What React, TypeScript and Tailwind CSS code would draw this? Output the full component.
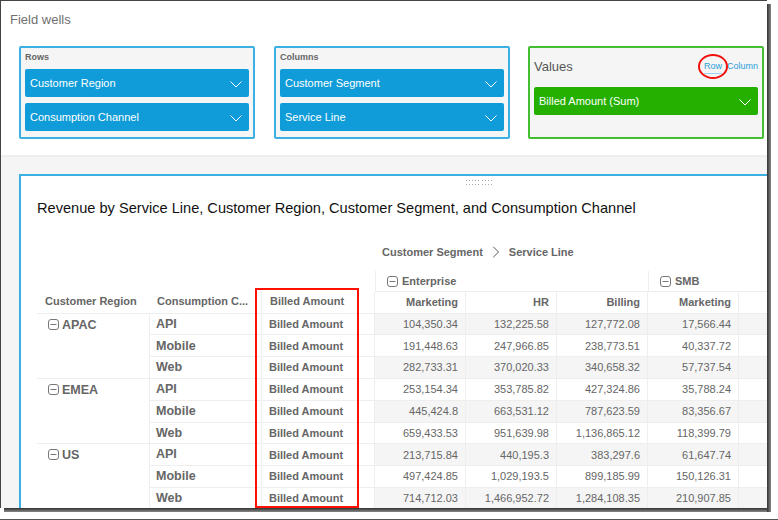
import { ChevronRight } from 'lucide-react';

const groups = [
  {
    region: 'APAC',
    rows: [
      ['API', '104,350.34', '132,225.58', '127,772.08', '17,566.44'],
      ['Mobile', '191,448.63', '247,966.85', '238,773.51', '40,337.72'],
      ['Web', '282,733.31', '370,020.33', '340,658.32', '57,737.54'],
    ],
  },
  {
    region: 'EMEA',
    rows: [
      ['API', '253,154.34', '353,785.82', '427,324.86', '35,788.24'],
      ['Mobile', '445,424.8', '663,531.12', '787,623.59', '83,356.67'],
      ['Web', '659,433.53', '951,639.98', '1,136,865.12', '118,399.79'],
    ],
  },
  {
    region: 'US',
    rows: [
      ['API', '213,715.84', '440,195.3', '383,297.6', '61,647.74'],
      ['Mobile', '497,424.85', '1,029,193.5', '899,185.99', '150,126.31'],
      ['Web', '714,712.03', '1,466,952.72', '1,284,108.35', '210,907.85'],
    ],
  },
];

function Chevron() {
  return (
    <svg width="12" height="7" viewBox="0 0 12 7" fill="none" stroke="white" strokeWidth="1" className="mt-[2px]">
      <path d="M0.5 0.5 L6 6 L11.5 0.5" />
    </svg>
  );
}

function Pill({ label, green }: { label: string; green?: boolean }) {
  return (
    <div
      className={
        'flex h-[28px] items-center justify-between rounded-[2px] pl-[5px] pr-[7px] text-[11px] text-white ' +
        (green ? 'bg-[#25b000]' : 'bg-[#0f9cd8]')
      }
    >
      <span>{label}</span>
      <Chevron />
    </div>
  );
}

function Well({ title, items, className }: { title: string; items: string[]; className: string }) {
  return (
    <div className={'h-[93px] w-[236px] rounded-[2px] border-2 border-[#3cb0e3] bg-[#f5f5f6] px-[4px] ' + className}>
      <div className="mt-[2px] h-[19px] text-[9px] font-bold leading-[14px] text-[#666]">{title}</div>
      <div className="flex flex-col gap-[6px]">
        {items.map((item) => (
          <Pill key={item} label={item} />
        ))}
      </div>
    </div>
  );
}

function Minus() {
  return (
    <svg width="11" height="11" viewBox="0 0 11 11" fill="none" stroke="#777" strokeWidth="1" className="shrink-0">
      <rect x="0.5" y="0.5" width="10" height="10" rx="2.5" />
      <path d="M2.5 5.5 H8.5" />
    </svg>
  );
}

export default function App() {
  return (
    <div className="relative h-[520px] w-[778px] overflow-hidden bg-white font-['Liberation_Sans',sans-serif]">
      <div className="relative flex h-[508px] w-[767px] flex-col overflow-hidden border-l border-t border-[#444]">
        {/* Field wells */}
        <div className="h-[156px] shrink-0 border-b-2 border-[#eeeeee] bg-white">
          <div className="h-[45px] pl-[9px] pt-[11px] text-[13px] leading-[16px] text-[#707070]">Field wells</div>
          <div className="flex">
            <Well title="Rows" items={['Customer Region', 'Consumption Channel']} className="ml-[18px]" />
            <Well title="Columns" items={['Customer Segment', 'Service Line']} className="ml-[19px]" />
            <div className="ml-[18px] h-[93px] w-[236px] rounded-[2px] border-2 border-[#44bd32] bg-[#f5f5f6] px-[4px]">
              <div className="flex h-[39px] items-center justify-between pb-[2px]">
                <span className="text-[13px] text-[#555]">Values</span>
                <div className="flex gap-[5px] text-[9px] leading-[12px] text-[#2b9fd8]">
                  <span className="border-b border-[#9fd4ef] pb-[1px]">Row</span>
                  <span className="pb-[2px]">Column</span>
                </div>
              </div>
              <Pill label="Billed Amount (Sum)" green />
            </div>
          </div>
        </div>

        {/* Pivot table card */}
        <div className="flex-1 bg-[#f5f5f5] pl-[18px] pt-[17px]">
          <div className="h-[400px] border-l-2 border-t-2 border-[#3cb0e3] bg-white pl-[16px]">
            <div className="ml-[429px] grid h-[6px] w-[28px] translate-y-[4px] grid-cols-[repeat(9,1fr)] gap-y-[2px]">
              {Array.from({ length: 18 }).map((_, i) => (
                <span key={i} className="h-[1px] w-[1px] bg-[#aaa]" />
              ))}
            </div>
            <div className="mt-[16px] h-[24px] text-[14.6px] leading-[20px] text-[#111]">
              Revenue by Service Line, Customer Region, Customer Segment, and Consumption Channel
            </div>
            <div className="ml-[345px] mt-[22px] flex h-[16px] items-center text-[11px] font-bold text-[#666]">
              Customer Segment
              <ChevronRight size={20} strokeWidth={1.2} className="mx-[3px] text-[#555]" />
              Service Line
            </div>

            <div className="mt-[11px] grid grid-cols-[112px_113px_113px_91px_91px_91px_91px_28px] grid-rows-[21px_21.7px_repeat(9,21.8px)] text-[11px] text-[#666]">
              {/* header */}
              <div className="col-span-3" />
              <div className="col-span-3 flex items-center gap-[4px] border-b border-l border-[#eee] pl-[11px] font-bold">
                <Minus />
                Enterprise
              </div>
              <div className="col-span-2 flex items-center gap-[4px] border-b border-l border-[#eee] pl-[11px] font-bold">
                <Minus />
                SMB
              </div>
              <div className="flex items-center border-b border-[#eee] pb-[2px] pl-[8px] font-bold">Customer Region</div>
              <div className="flex items-center border-b border-r border-[#eee] pb-[2px] pl-[8px] font-bold">Consumption C...</div>
              <div className="flex items-center border-b border-r border-[#eee] pb-[2px] pl-[8px] font-bold">Billed Amount</div>
              {['Marketing', 'HR', 'Billing', 'Marketing'].map((h, i) => (
                <div key={i} className="flex items-center justify-end border-b border-r border-[#eee] pr-[7px] font-bold">
                  {h}
                </div>
              ))}
              <div className="border-b border-[#eee]" />

              {groups.map((g, gi) =>
                g.rows.map((row, ri) => {
                  const grey = (gi * 3 + ri) % 2 === 0;
                  return (
                    <div key={g.region + ri} className="contents">
                      {ri === 0 && (
                        <div className="row-span-3 flex items-start gap-[3px] border-b border-[#eee] pl-[11px] pt-[3px] text-[12.5px] font-bold leading-[16px]">
                          <span className="mt-[2px]">
                            <Minus />
                          </span>
                          {g.region}
                        </div>
                      )}
                      <div className="flex items-center border-b border-l border-r border-[#eee] pl-[6px] text-[12.5px] font-bold">{row[0]}</div>
                      <div className="flex items-center border-b border-r border-[#eee] pl-[7px] font-bold">Billed Amount</div>
                      {row.slice(1).map((v, i) => (
                        <div
                          key={i}
                          className={'flex items-center justify-end border-b border-r border-[#eee] pr-[7px] ' + (grey ? 'bg-[#f5f5f5]' : 'bg-white')}
                        >
                          {v}
                        </div>
                      ))}
                      <div className={'border-b border-[#eee] ' + (grey ? 'bg-[#f5f5f5]' : 'bg-white')} />
                    </div>
                  );
                }),
              )}
            </div>
          </div>
        </div>

        {/* annotations */}
        <div className="absolute left-[254px] top-[287px] h-[220px] w-[104px] border-2 border-[#ff1000]" />
        <div className="absolute left-[697px] top-[53px] h-[25px] w-[30px] rounded-[50%] border-2 border-[#f0100c]" />
      </div>
      {/* window shadow */}
      <div className="absolute left-[4px] top-[508px] h-[4px] w-[767px] bg-gradient-to-b from-[#333] to-[#888]" />
      <div className="absolute left-[767px] top-[4px] h-[508px] w-[4px] bg-gradient-to-r from-[#333] to-[#888]" />
      <div className="absolute bottom-0 left-0 h-[1px] w-full bg-[#555]" />
    </div>
  );
}
